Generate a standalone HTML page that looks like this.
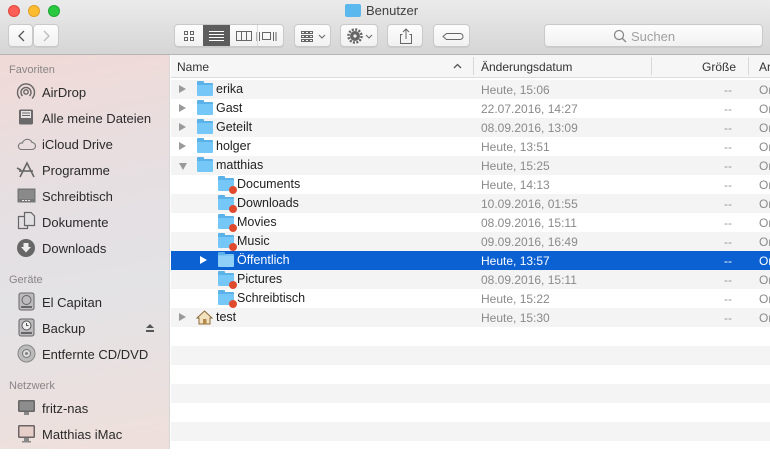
<!DOCTYPE html>
<html><head><meta charset="utf-8">
<style>
*{margin:0;padding:0;box-sizing:border-box}
body{width:770px;height:449px;overflow:hidden;font-family:"Liberation Sans",sans-serif;background:#fff;position:relative}
.abs{position:absolute}
#tb{left:0;top:0;width:770px;height:55px;background:linear-gradient(#ebebeb,#d5d5d5);border-bottom:1px solid #b5b5b5}
.dot{width:12px;height:12px;border-radius:50%;top:5px}
.btn{background:linear-gradient(#fdfdfd,#f1f1f1);border:1px solid #c9c9c9;border-radius:4px;top:24px;height:23px;box-shadow:0 1px 0 rgba(0,0,0,.05)}
#sb{left:0;top:55px;width:170px;height:394px;background:linear-gradient(170deg,#f0dad7 0%,#e6dfe2 35%,#e3e2e5 60%,#efdfdb 100%);border-right:1px solid #d6d6d6}
.sh{font-size:11px;color:#8a8585;left:9px}
.si{font-size:13px;color:#2a2a2a;left:42px}
#hdr{left:171px;top:55px;width:599px;height:23px;background:#f6f6f6;border-bottom:1px solid #dcdcdc;font-size:12px;color:#333}
.row{left:171px;width:599px;height:19px;font-size:12px}
.g{background:#f4f4f4}
.n{position:absolute;top:2px;color:#222;font-size:12.5px}
.d{position:absolute;left:310px;top:3px;color:#8a8a8a}
.s{position:absolute;left:553px;top:3px;color:#999}
.o{position:absolute;left:588px;top:3px;color:#8a8a8a}
.tri{position:absolute;top:5px;width:0;height:0;border-top:4.5px solid transparent;border-bottom:4.5px solid transparent;border-left:7px solid #9a9a9a}
.trd{position:absolute;top:7px;left:8px;width:0;height:0;border-left:4.5px solid transparent;border-right:4.5px solid transparent;border-top:7px solid #9a9a9a}
.f{position:absolute;top:3px;width:16px;height:13px;background:#74c7f7;border-radius:1px;border-top:2px solid #5bb2e8}
.f:before{content:"";position:absolute;left:0;top:-4px;width:7px;height:3px;background:#5bb2e8;border-radius:1px 1px 0 0}
.f.x:after{content:"";position:absolute;right:-3px;bottom:-3px;width:8px;height:8px;border-radius:50%;background:#e04b2f}
.sel{background:#0b60d2}
.sel .n,.sel .d,.sel .s,.sel .o{color:#fff}
</style></head><body>
<div id="tb" class="abs"></div>
<div class="abs dot" style="left:8px;background:#fc5f57;border:1px solid #e2463f"></div>
<div class="abs dot" style="left:28px;background:#fdbc2e;border:1px solid #e0a028"></div>
<div class="abs dot" style="left:48px;background:#28c83f;border:1px solid #1ea934"></div>
<div class="abs" style="left:345px;top:4px;width:16px;height:13px;background:#5ab8ef;border-radius:2px"></div>
<div class="abs" style="left:366px;top:3px;font-size:13px;color:#404040">Benutzer</div>
<div class="abs btn" style="left:8px;width:25px"><svg width="25" height="23" style="position:absolute;left:0;top:0"><path d="M15 6 L10 11 L15 16" stroke="#555" stroke-width="1.3" fill="none"/></svg></div>
<div class="abs btn" style="left:33px;width:26px"><svg width="25" height="23" style="position:absolute;left:0;top:0"><path d="M10 6 L15 11 L10 16" stroke="#bbb" stroke-width="1.3" fill="none"/></svg></div>
<div class="abs btn" style="left:174px;width:110px;overflow:hidden">
<svg width="110" height="23" style="position:absolute;left:0;top:0">
<g fill="none" stroke="#666" stroke-width="1"><rect x="9.5" y="6.5" width="3" height="3"/><rect x="15.5" y="6.5" width="3" height="3"/><rect x="9.5" y="12.5" width="3" height="3"/><rect x="15.5" y="12.5" width="3" height="3"/></g>
<rect x="28" y="0" width="27" height="23" fill="#5d5d5d"/>
<g stroke="#fff"><line x1="34" x2="49" y1="6.5" y2="6.5"/><line x1="34" x2="49" y1="9.5" y2="9.5"/><line x1="34" x2="49" y1="12.5" y2="12.5"/><line x1="34" x2="49" y1="15.5" y2="15.5"/></g>
<g fill="none" stroke="#666"><rect x="61.5" y="6.5" width="15" height="9"/><line x1="66.5" x2="66.5" y1="6" y2="16"/><line x1="71.5" x2="71.5" y1="6" y2="16"/>
<line x1="82" y1="7" x2="82" y2="16"/><line x1="84.5" y1="7" x2="84.5" y2="16"/><rect x="87.5" y="7.5" width="8" height="7"/><line x1="98.5" y1="7" x2="98.5" y2="16"/><line x1="101" y1="7" x2="101" y2="16"/>
<line x1="82.5" y1="0" x2="82.5" y2="23" stroke="#ddd"/></g>
</svg></div>
<div class="abs btn" style="left:294px;width:37px"><svg width="37" height="23" style="position:absolute;left:0;top:0"><g fill="none" stroke="#666"><rect x="6.5" y="6.5" width="3" height="2"/><rect x="10.5" y="6.5" width="3" height="2"/><rect x="14.5" y="6.5" width="3" height="2"/><rect x="6.5" y="10.5" width="3" height="2"/><rect x="10.5" y="10.5" width="3" height="2"/><rect x="14.5" y="10.5" width="3" height="2"/><rect x="6.5" y="14.5" width="3" height="2"/><rect x="10.5" y="14.5" width="3" height="2"/><rect x="14.5" y="14.5" width="3" height="2"/><path d="M24 10 L27 13 L30 10"/></g></svg></div>
<div class="abs btn" style="left:340px;width:38px"><svg width="38" height="23" style="position:absolute;left:0;top:0"><circle cx="14" cy="11" r="5" fill="#666"/><circle cx="14" cy="11" r="6.5" fill="none" stroke="#666" stroke-width="2.5" stroke-dasharray="2 1.4"/><circle cx="14" cy="11" r="1.6" fill="#f5f5f5"/><path d="M25 10 L28 13 L31 10" fill="none" stroke="#666"/></svg></div>
<div class="abs btn" style="left:387px;width:36px"><svg width="36" height="23" style="position:absolute;left:0;top:0"><g fill="none" stroke="#666"><path d="M14.5 9.5 H12.5 V18.5 H23.5 V9.5 H21.5"/><line x1="18" y1="4" x2="18" y2="14"/><path d="M15 7 L18 4 L21 7"/></g></svg></div>
<div class="abs btn" style="left:433px;width:37px"><svg width="37" height="23" style="position:absolute;left:0;top:0"><path d="M12.5 8.5 H26 a2.5 2.5 0 0 1 0 6 H12.5 L9 11.5 Z" fill="none" stroke="#666"/></svg></div>
<div class="abs btn" style="left:544px;width:219px;"><svg width="14" height="14" style="position:absolute;left:68px;top:4px"><circle cx="6" cy="6" r="4.5" fill="none" stroke="#888" stroke-width="1.3"/><line x1="9.2" y1="9.2" x2="13" y2="13" stroke="#888" stroke-width="1.4"/></svg><span style="position:absolute;left:86px;top:4px;font-size:13px;color:#a0a0a0">Suchen</span></div>

<div id="sb" class="abs"></div>
<div class="abs sh" style="top:64px">Favoriten</div>
<svg class="abs" style="left:16px;top:82px" width="20" height="20"><g fill="none" stroke="#666" stroke-width="1.4"><circle cx="10" cy="10" r="2.2"/><path d="M6.5 14 A5 5 0 1 1 13.5 14"/><path d="M4 16.5 A8.5 8.5 0 1 1 16 16.5"/></g></svg>
<div class="abs si" style="top:85px">AirDrop</div>
<svg class="abs" style="left:17px;top:108px" width="18" height="18"><rect x="2" y="1.5" width="14" height="15" rx="1.5" fill="#6a6a6a"/><rect x="4" y="3" width="10" height="7" fill="#e8e4e6"/><g stroke="#6a6a6a"><line x1="5" x2="13" y1="5" y2="5"/><line x1="5" x2="13" y1="7.5" y2="7.5"/></g></svg>
<div class="abs si" style="top:111px">Alle meine Dateien</div>
<svg class="abs" style="left:16px;top:136px" width="20" height="16"><path d="M5 13.5 H16 a3.5 3.5 0 0 0 0-7 a5 5 0 0 0-9.5 0.5 A3.3 3.3 0 0 0 5 13.5Z" fill="none" stroke="#777" stroke-width="1.1"/></svg>
<div class="abs si" style="top:137px">iCloud Drive</div>
<svg class="abs" style="left:16px;top:160px" width="20" height="20"><g stroke="#666" stroke-width="1.6" fill="none"><path d="M4 17 L11 3 L18 17"/><line x1="3" y1="11" x2="17" y2="11"/><line x1="1" y1="8" x2="5" y2="10"/></g></svg>
<div class="abs si" style="top:163px">Programme</div>
<svg class="abs" style="left:17px;top:187px" width="20" height="17"><rect x="0.5" y="1.5" width="18" height="14" fill="#777"/><rect x="2" y="3" width="15" height="9" fill="#8a8a8a"/><g fill="#eee"><rect x="5" y="13" width="2" height="1"/><rect x="8" y="13" width="2" height="1"/><rect x="11" y="13" width="2" height="1"/></g></svg>
<div class="abs si" style="top:189px">Schreibtisch</div>
<svg class="abs" style="left:17px;top:211px" width="20" height="20"><g fill="#e2e0e2" stroke="#666" stroke-width="1.2"><path d="M1.5 5.5 H8 L10.5 8 V17.5 H1.5Z"/><path d="M7.5 1.5 H14 L17.5 5 V14.5 H7.5Z"/></g></svg>
<div class="abs si" style="top:215px">Dokumente</div>
<svg class="abs" style="left:16px;top:238px" width="20" height="20"><circle cx="10" cy="10" r="9" fill="#676767"/><path d="M7.5 5 H12.5 V9 H15 L10 14.5 L5 9 H7.5Z" fill="#eee"/></svg>
<div class="abs si" style="top:241px">Downloads</div>
<div class="abs sh" style="top:274px">Geräte</div>
<svg class="abs" style="left:18px;top:292px" width="18" height="20"><rect x="1" y="1" width="15" height="17" rx="2" fill="#bdbbbd" stroke="#666"/><circle cx="8.5" cy="8" r="4.5" fill="none" stroke="#666"/><rect x="3" y="14" width="11" height="2" fill="#666"/></svg>
<div class="abs si" style="top:295px">El Capitan</div>
<svg class="abs" style="left:18px;top:318px" width="18" height="20"><rect x="1" y="1" width="15" height="17" rx="2" fill="#bdbbbd" stroke="#666"/><circle cx="8.5" cy="7.5" r="4.5" fill="#eee" stroke="#555"/><path d="M8.5 5 V7.5 H10.5" stroke="#555" fill="none"/><rect x="3" y="14" width="11" height="2" fill="#666"/></svg>
<div class="abs si" style="top:321px">Backup</div>
<svg class="abs" style="left:145px;top:323px" width="10" height="10"><path d="M5 1 L9 5 H1Z" fill="#555"/><rect x="1" y="7" width="8" height="2" fill="#555"/></svg>
<svg class="abs" style="left:17px;top:344px" width="19" height="19"><circle cx="9.5" cy="9.5" r="8.5" fill="#bbb" stroke="#888"/><circle cx="9.5" cy="9.5" r="4" fill="#ddd" stroke="#777"/><circle cx="9.5" cy="9.5" r="1.4" fill="#777"/></svg>
<div class="abs si" style="top:347px">Entfernte CD/DVD</div>
<div class="abs sh" style="top:380px">Netzwerk</div>
<svg class="abs" style="left:17px;top:399px" width="19" height="18"><rect x="1" y="1" width="17" height="12" rx="1.5" fill="#666"/><rect x="2.5" y="2.5" width="14" height="9" fill="#8d8d8d"/><rect x="7" y="13" width="5" height="3" fill="#888"/></svg>
<div class="abs si" style="top:401px">fritz-nas</div>
<svg class="abs" style="left:17px;top:424px" width="19" height="20"><rect x="1" y="1" width="17" height="13" rx="1.5" fill="#6b6365"/><rect x="2.5" y="2.5" width="14" height="10" fill="#e6cfc8"/><rect x="7" y="14" width="5" height="3" fill="#888"/><rect x="5" y="17" width="9" height="1.5" fill="#888"/></svg>
<div class="abs si" style="top:427px">Matthias iMac</div>

<div id="hdr" class="abs">
<span style="position:absolute;left:6px;top:5px">Name</span>
<svg style="position:absolute;left:282px;top:8px" width="9" height="6"><path d="M1 5 L4.5 1.5 L8 5" stroke="#555" stroke-width="1.3" fill="none"/></svg>
<div style="position:absolute;left:302px;top:2px;width:1px;height:18px;background:#d8d8d8"></div>
<span style="position:absolute;left:310px;top:5px">Änderungsdatum</span>
<div style="position:absolute;left:480px;top:2px;width:1px;height:18px;background:#d8d8d8"></div>
<span style="position:absolute;left:531px;top:5px">Größe</span>
<div style="position:absolute;left:577px;top:2px;width:1px;height:18px;background:#d8d8d8"></div>
<span style="position:absolute;left:588px;top:5px">Ar</span>
</div>

<div class="abs row g" style="top:80px"><div class="tri" style="left:8px"></div><div class="f" style="left:26px"></div><span class="n" style="left:45px">erika</span><span class="d">Heute, 15:06</span><span class="s">--</span><span class="o">Or</span></div>
<div class="abs row" style="top:99px"><div class="tri" style="left:8px"></div><div class="f" style="left:26px"></div><span class="n" style="left:45px">Gast</span><span class="d">22.07.2016, 14:27</span><span class="s">--</span><span class="o">Or</span></div>
<div class="abs row g" style="top:118px"><div class="tri" style="left:8px"></div><div class="f" style="left:26px"></div><span class="n" style="left:45px">Geteilt</span><span class="d">08.09.2016, 13:09</span><span class="s">--</span><span class="o">Or</span></div>
<div class="abs row" style="top:137px"><div class="tri" style="left:8px"></div><div class="f" style="left:26px"></div><span class="n" style="left:45px">holger</span><span class="d">Heute, 13:51</span><span class="s">--</span><span class="o">Or</span></div>
<div class="abs row g" style="top:156px"><div class="trd"></div><div class="f" style="left:26px"></div><span class="n" style="left:45px">matthias</span><span class="d">Heute, 15:25</span><span class="s">--</span><span class="o">Or</span></div>
<div class="abs row" style="top:175px"><div class="f x" style="left:47px"></div><span class="n" style="left:66px">Documents</span><span class="d">Heute, 14:13</span><span class="s">--</span><span class="o">Or</span></div>
<div class="abs row g" style="top:194px"><div class="f x" style="left:47px"></div><span class="n" style="left:66px">Downloads</span><span class="d">10.09.2016, 01:55</span><span class="s">--</span><span class="o">Or</span></div>
<div class="abs row" style="top:213px"><div class="f x" style="left:47px"></div><span class="n" style="left:66px">Movies</span><span class="d">08.09.2016, 15:11</span><span class="s">--</span><span class="o">Or</span></div>
<div class="abs row g" style="top:232px"><div class="f x" style="left:47px"></div><span class="n" style="left:66px">Music</span><span class="d">09.09.2016, 16:49</span><span class="s">--</span><span class="o">Or</span></div>
<div class="abs row sel" style="top:251px"><div class="tri" style="left:29px;border-left-color:#fff"></div><div class="f" style="left:47px;background:#8fd0f8;border-top-color:#7cc4f2"></div><span class="n" style="left:66px">Öffentlich</span><span class="d">Heute, 13:57</span><span class="s">--</span><span class="o">Or</span></div>
<div class="abs row g" style="top:270px"><div class="f x" style="left:47px"></div><span class="n" style="left:66px">Pictures</span><span class="d">08.09.2016, 15:11</span><span class="s">--</span><span class="o">Or</span></div>
<div class="abs row" style="top:289px"><div class="f x" style="left:47px"></div><span class="n" style="left:66px">Schreibtisch</span><span class="d">Heute, 15:22</span><span class="s">--</span><span class="o">Or</span></div>
<div class="abs row g" style="top:308px"><div class="tri" style="left:8px"></div><svg style="position:absolute;left:25px;top:2px" width="17" height="15"><path d="M8.5 1 L16 8 H14 V14 H3 V8 H1Z" fill="#f2e2c0" stroke="#8a6a3a"/><rect x="7" y="9" width="3.5" height="5" fill="#b5894b"/></svg><span class="n" style="left:45px">test</span><span class="d">Heute, 15:30</span><span class="s">--</span><span class="o">Or</span></div>
<div class="abs row" style="top:327px"></div>
<div class="abs row g" style="top:346px"></div>
<div class="abs row" style="top:365px"></div>
<div class="abs row g" style="top:384px"></div>
<div class="abs row" style="top:403px"></div>
<div class="abs row g" style="top:422px"></div>
<div class="abs row" style="top:441px"></div>
</body></html>
